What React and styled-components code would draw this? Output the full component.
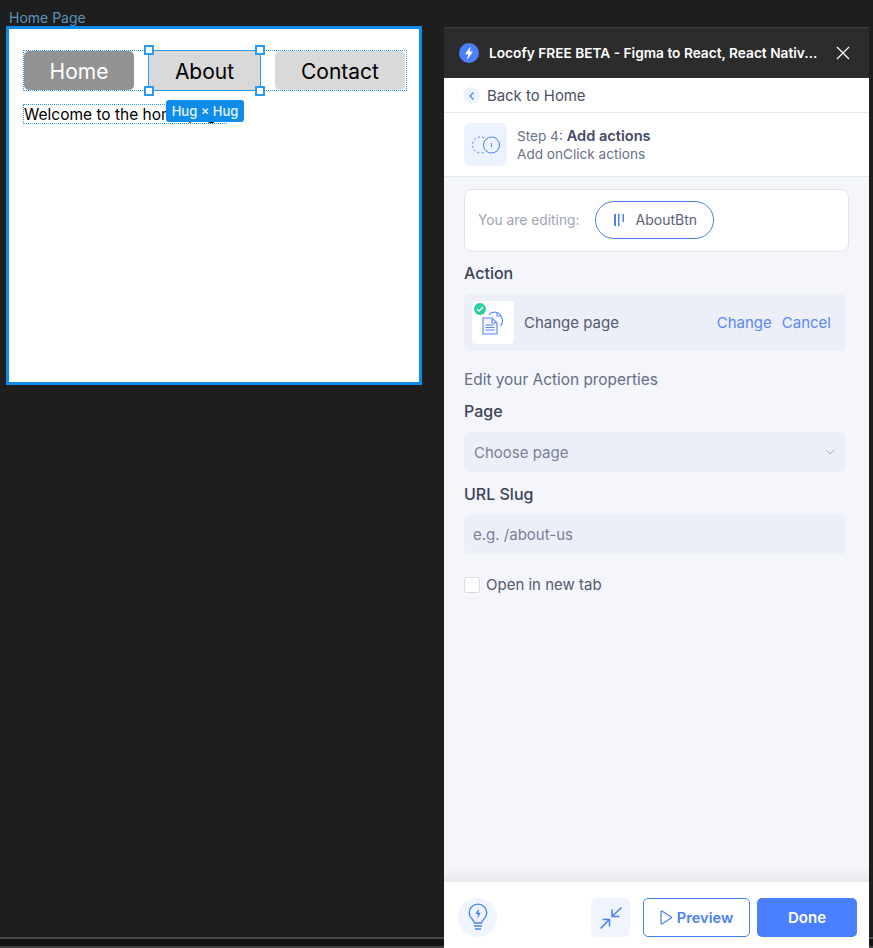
import React from "react";
import styled, { createGlobalStyle } from "styled-components";

const GlobalStyle = createGlobalStyle`
  html, body {
    margin: 0;
    padding: 0;
    background: #1e1e1e;
  }
  * {
    box-sizing: border-box;
  }
`;

const Page = styled.div`
  width: 873px;
  height: 948px;
  overflow: hidden;
  display: flex;
  position: relative;
  background: #1e1e1e;
  font-family: Inter, "Liberation Sans", sans-serif;
`;

const BottomBar = styled.div`
  position: absolute;
  left: 0;
  right: 0;
  top: 937px;
  height: 11px;
  background: #141414;
  border-top: 2px solid #484848;
  border-bottom: 2px solid #404040;
`;

const Canvas = styled.div`
  width: 444px;
  padding-left: 6px;
  flex-shrink: 0;
`;

const FrameLabel = styled.div`
  height: 26px;
  padding: 10px 0 0 3px;
  font-size: 14px;
  line-height: 15px;
  color: #5b93bd;
`;

const Frame = styled.div`
  width: 416px;
  height: 359px;
  background: #ffffff;
  border: 3px solid #0d8ce9;
  padding: 21px 0 0 14px;
  position: relative;
`;

const Nav = styled.div`
  width: 384px;
  height: 41px;
  border: 1px dotted #2a9bf0;
  display: flex;
  gap: 15px;
`;

const NavButton = styled.div`
  width: ${(p) => p.$width}px;
  height: 39px;
  padding-top: 1px;
  display: flex;
  align-items: center;
  justify-content: center;
  font-size: 21px;
  border-radius: ${(p) => (p.$selected ? 0 : 5)}px;
  background: ${(p) => (p.$active ? "#929292" : "#d9d9d9")};
  color: ${(p) => (p.$active ? "#ffffff" : "#000000")};
  position: relative;
  ${(p) => p.$selected && "outline: 1px solid #2a9bf0;"}
`;

const Handle = styled.span`
  position: absolute;
  width: 10px;
  height: 10px;
  background: #ffffff;
  border: 2px solid #2a9bf0;
  ${(p) => p.$v}: -6px;
  ${(p) => p.$h}: -5px;
`;

const Welcome = styled.div`
  margin-top: 13px;
  width: 204px;
  height: 20px;
  border-top: 1px dotted #2a9bf0;
  border-bottom: 1px dotted #2a9bf0;
  border-left: 1px dotted #2a9bf0;
  font-size: 15.5px;
  line-height: 20px;
  color: #000000;
  white-space: nowrap;
`;

const HugTag = styled.div`
  position: absolute;
  left: 157px;
  top: 71px;
  width: 78px;
  height: 22px;
  border-radius: 3px;
  background: #0d8ce9;
  color: #eaf5fe;
  font-size: 13px;
  font-weight: 500;
  display: flex;
  align-items: center;
  justify-content: center;
`;

const Panel = styled.div`
  width: 425px;
  margin-top: 27px;
  height: 921px;
  display: flex;
  flex-direction: column;
  flex-shrink: 0;
  position: relative;
  background: #f4f6fb;
`;

const TitleBar = styled.div`
  height: 51px;
  background: #2c2c2c;
  border-top: 1px solid #3d3d3d;
  padding: 0 18px 0 15px;
  display: flex;
  align-items: center;
  gap: 10px;
`;

const TitleText = styled.div`
  flex: 1;
  font-size: 13.7px;
  font-weight: 600;
  color: #ffffff;
  white-space: nowrap;
`;

const BackRow = styled.div`
  height: 35px;
  background: #ffffff;
  border-bottom: 1px solid #e4e8f2;
  padding: 1px 0 0 19px;
  display: flex;
  align-items: center;
  gap: 7px;
  font-size: 14.9px;
  color: #4a5068;
`;

const BackCircle = styled.span`
  width: 17px;
  height: 17px;
  border-radius: 50%;
  background: #edf2fd;
  display: flex;
  align-items: center;
  justify-content: center;
`;

const StepRow = styled.div`
  height: 64px;
  background: #ffffff;
  border-bottom: 1px solid #e0e5f0;
  padding: 10px 0 0 20px;
  display: flex;
  gap: 10px;
`;

const StepIcon = styled.div`
  width: 43px;
  height: 43px;
  border-radius: 6px;
  background: #ecf2fe;
  display: flex;
  align-items: center;
  justify-content: center;
`;

const StepText = styled.div`
  display: flex;
  flex-direction: column;
  padding-top: 4px;
  font-size: 13.6px;
  line-height: 18px;
  color: #6a708a;

  b {
    font-size: 14.6px;
    font-weight: 600;
    color: #434962;
  }
`;

const Body = styled.div`
  flex: 1;
  padding: 12px 23px 0 20px;
  display: flex;
  flex-direction: column;
  background: linear-gradient(to top, #e8e9ee 0, #f4f6fb 16px);
`;

const EditingCard = styled.div`
  width: 385px;
  height: 63px;
  background: #ffffff;
  border: 1px solid #e0e3ec;
  border-radius: 8px;
  padding: 0 13px 2px;
  display: flex;
  align-items: center;
  gap: 15px;
  font-size: 13.8px;
  color: #a0a4ba;
`;

const Pill = styled.div`
  width: 119px;
  height: 38px;
  border: 1px solid #4a80f5;
  border-radius: 19px;
  padding-left: 18px;
  display: flex;
  align-items: center;
  gap: 11px;
  font-size: 14px;
  color: #5c6178;
`;

const Heading = styled.div`
  margin-top: ${(p) => p.$top}px;
  font-size: 16px;
  line-height: 18px;
  font-weight: 500;
  color: #3d4256;
`;

const ActionBox = styled.div`
  margin-top: 12px;
  width: 382px;
  height: 57px;
  background: #eceff7;
  border-radius: 6px;
  padding: 0 15px 0 8px;
  display: flex;
  align-items: center;
  font-size: 15px;
  color: #555a70;
`;

const ActionIcon = styled.div`
  width: 42px;
  height: 43px;
  background: #ffffff;
  border-radius: 4px;
  position: relative;
  margin-right: 10px;
  display: flex;
  align-items: center;
  justify-content: center;
`;

const CheckBadge = styled.span`
  position: absolute;
  left: 2px;
  top: 2px;
  width: 12px;
  height: 12px;
  border-radius: 50%;
  background: #2dcfa0;
  display: flex;
  align-items: center;
  justify-content: center;
`;

const ActionName = styled.span`
  flex: 1;
`;

const ActionLink = styled.span`
  color: #5b86f5;
  margin-left: 10px;
`;

const SubHeading = styled.div`
  margin-top: 20px;
  font-size: 15.4px;
  line-height: 18px;
  color: #666c85;
`;

const Field = styled.div`
  margin-top: ${(p) => p.$top}px;
  width: 382px;
  height: 40px;
  background: #eceff7;
  border-radius: 6px;
  padding: 0 11px 0 ${(p) => p.$pad}px;
  display: flex;
  align-items: center;
  justify-content: space-between;
  font-size: 15px;
  color: #7b8098;
`;

const CheckRow = styled.div`
  margin-top: 21px;
  display: flex;
  align-items: center;
  gap: 6px;
  font-size: 15px;
  color: #555a70;
`;

const Checkbox = styled.span`
  width: 16px;
  height: 16px;
  background: #ffffff;
  border: 1px solid #d9dce6;
  border-radius: 3px;
`;

const Footer = styled.div`
  height: 66px;
  background: #ffffff;
  padding: 16px 12px 0 14px;
  display: flex;
  align-items: flex-start;
`;

const BulbCircle = styled.div`
  width: 39px;
  height: 39px;
  border-radius: 50%;
  background: #eff4fd;
  display: flex;
  align-items: center;
  justify-content: center;
  margin-right: auto;
`;

const SquareButton = styled.div`
  width: 39px;
  height: 39px;
  border-radius: 6px;
  background: #eff4fd;
  display: flex;
  align-items: center;
  justify-content: center;
  margin-right: 13px;
`;

const PreviewButton = styled.div`
  width: 107px;
  height: 39px;
  border: 1px solid #4a80f5;
  border-radius: 5px;
  background: #ffffff;
  color: #4a80f5;
  font-size: 14.6px;
  font-weight: 600;
  display: flex;
  align-items: center;
  justify-content: center;
  gap: 5px;
  margin-right: 7px;
`;

const DoneButton = styled.div`
  width: 100px;
  height: 39px;
  border-radius: 5px;
  background: #4a80ff;
  color: #ffffff;
  font-size: 15px;
  font-weight: 600;
  display: flex;
  align-items: center;
  justify-content: center;
`;

function LocofyLogo() {
  return (
    <svg width="20" height="20" viewBox="0 0 20 20">
      <circle cx="10" cy="10" r="10" fill="#4a80ff" />
      <path d="M11.800 3 6 11.300h3.300L8 17l6-8.500h-3.400z" fill="#ffffff" />
    </svg>
  );
}

function CloseIcon() {
  return (
    <svg width="16" height="16" viewBox="0 0 16 16" fill="none" stroke="#ffffff" strokeWidth="1.200">
      <path d="M2 2l12 12M14 2 2 14" />
    </svg>
  );
}

function StepGlyph() {
  return (
    <svg width="30" height="22" viewBox="0 0 30 22" fill="none" stroke="#4a80f5">
      <path d="M13 3.800A8 8 0 1 0 13 18.200" strokeDasharray="2 2.200" />
      <circle cx="20.500" cy="11" r="8" />
      <path d="M20.500 9v4" />
    </svg>
  );
}

function PagesIcon() {
  return (
    <svg width="22" height="24" viewBox="0 0 22 24" fill="none" stroke="#5b86f5" strokeWidth="1.100">
      <path d="M7 3.500a7.500 7.500 0 0 1 12.500 2.500c1.500 3 1 6.500-1 9" />
      <path d="M15 1v4h4" />
      <path d="M1 7h9l5 5v11H1z" fill="#f0f5ff" />
      <path d="M10 7.500V12h4.500M3.500 14h8M3.500 16.500h9M3.500 19h9" />
    </svg>
  );
}

function BulbIcon() {
  return (
    <svg width="20" height="30" viewBox="0 0 20 30" fill="none" stroke="#4a80f5" strokeWidth="1.300">
      <path d="M6.500 20c0-3-5.300-4.500-5.300-10a8.800 8.800 0 0 1 17.600 0c0 5.500-5.300 7-5.300 10z" />
      <path d="M6 23h8M7 26h6" />
      <path d="M10.800 5 7.500 11h2.500l-.8 5 3.600-6.300h-2.500z" fill="#4a80f5" stroke="none" />
    </svg>
  );
}

export default function App() {
  return (
    <>
      <GlobalStyle />
      <Page>
        <BottomBar />
        <Canvas>
          <FrameLabel>Home Page</FrameLabel>
          <Frame>
            <Nav>
              <NavButton $width={110} $active>
                Home
              </NavButton>
              <NavButton $width={111} $selected>
                About
                <Handle $v="top" $h="left" />
                <Handle $v="top" $h="right" />
                <Handle $v="bottom" $h="left" />
                <Handle $v="bottom" $h="right" />
              </NavButton>
              <NavButton $width={130}>Contact</NavButton>
            </Nav>
            <Welcome>Welcome to the home page</Welcome>
            <HugTag>Hug × Hug</HugTag>
          </Frame>
        </Canvas>
        <Panel>
          <TitleBar>
            <LocofyLogo />
            <TitleText>Locofy FREE BETA - Figma to React, React Nativ...</TitleText>
            <CloseIcon />
          </TitleBar>
          <BackRow>
            <BackCircle>
              <svg width="10" height="10" viewBox="0 0 10 10" fill="none" stroke="#4a80f5" strokeWidth="1.300">
                <path d="M6.500 1.500 3 5l3.500 3.500" />
              </svg>
            </BackCircle>
            Back to Home
          </BackRow>
          <StepRow>
            <StepIcon>
              <StepGlyph />
            </StepIcon>
            <StepText>
              <span>
                Step 4: <b>Add actions</b>
              </span>
              <span>Add onClick actions</span>
            </StepText>
          </StepRow>
          <Body>
            <EditingCard>
              You are editing:
              <Pill>
                <svg width="11" height="12" viewBox="0 0 11 12" fill="#4a80f5">
                  <rect x="0" y="0" width="2" height="12" />
                  <rect x="4" y="0" width="1.500" height="12" />
                  <rect x="8.500" y="0" width="1.500" height="8" />
                </svg>
                AboutBtn
              </Pill>
            </EditingCard>
            <Heading $top={12}>Action</Heading>
            <ActionBox>
              <ActionIcon>
                <CheckBadge>
                  <svg width="8" height="8" viewBox="0 0 8 8" fill="none" stroke="#ffffff" strokeWidth="1.400">
                    <path d="M1 4.200 3.200 6 7 2" />
                  </svg>
                </CheckBadge>
                <PagesIcon />
              </ActionIcon>
              <ActionName>Change page</ActionName>
              <ActionLink>Change</ActionLink>
              <ActionLink>Cancel</ActionLink>
            </ActionBox>
            <SubHeading>Edit your Action properties</SubHeading>
            <Heading $top={13}>Page</Heading>
            <Field $pad={10} $top={12}>
              Choose page
              <svg width="10" height="6" viewBox="0 0 10 6" fill="none" stroke="#a4a9bd" strokeWidth="1">
                <path d="M1 1l4 4 4-4" />
              </svg>
            </Field>
            <Heading $top={13}>URL Slug</Heading>
            <Field $pad={9} $top={11}>
              e.g. /about-us
            </Field>
            <CheckRow>
              <Checkbox />
              Open in new tab
            </CheckRow>
          </Body>
          <Footer>
            <BulbCircle>
              <BulbIcon />
            </BulbCircle>
            <SquareButton>
              <svg width="24" height="24" viewBox="0 0 24 24" fill="none" stroke="#4a80f5" strokeWidth="1.500">
                <path d="M22.500 1.500 13 10.500M13 3.500v7h7.500M1.500 22.500l9-9M3.500 13.500h7v7" />
              </svg>
            </SquareButton>
            <PreviewButton>
              <svg width="12" height="15" viewBox="0 0 12 15" fill="none" stroke="#4a80f5" strokeWidth="1.200">
                <path d="M1 1.500v12a.6.6 0 0 0 .9.5l9.300-6a.6.6 0 0 0 0-1L1.900 1a.6.6 0 0 0-.9.5z" />
              </svg>
              Preview
            </PreviewButton>
            <DoneButton>Done</DoneButton>
          </Footer>
        </Panel>
      </Page>
    </>
  );
}
